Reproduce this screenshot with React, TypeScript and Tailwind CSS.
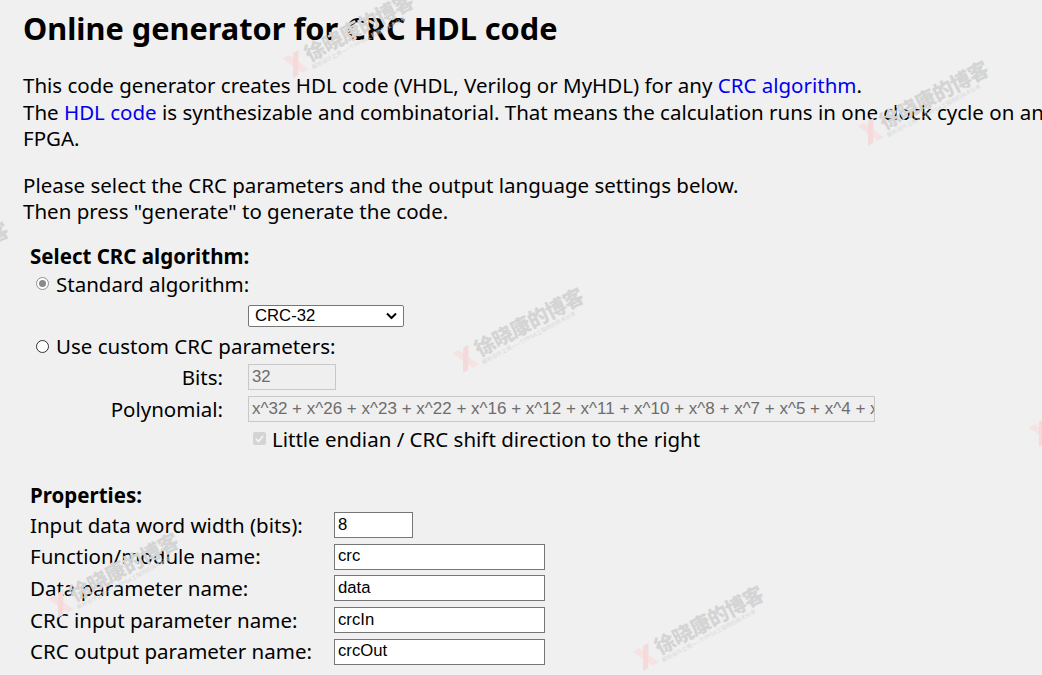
import React from 'react';

const POLY =
  'x^32 + x^26 + x^23 + x^22 + x^16 + x^12 + x^11 + x^10 + x^8 + x^7 + x^5 + x^4 + x^2 + x + 1';

function Watermark({ x, y }: { x: number; y: number }) {
  return (
    <div
      className="pointer-events-none absolute flex items-center gap-[3px] whitespace-nowrap -translate-x-1/2 -translate-y-1/2 rotate-[-28deg] select-none"
      style={{ left: x, top: y }}
    >
      <svg width="20" height="26" viewBox="0 0 20 26" className="shrink-0">
        <path d="M1 2 L8 2 L19 24 L12 24 Z" fill="#f6e2e2" />
        <path d="M19 2 L13 2 L1 24 L7 24 Z" fill="#f4dada" />
      </svg>
      <div className="flex flex-col leading-none">
        <span className="font-['Noto_Sans_CJK_SC',sans-serif] text-[20.5px] font-black tracking-[-0.5px] text-[#d4d4d4]">
          徐晓康的博客
        </span>
        <span className="mt-[2px] font-['Noto_Sans_CJK_SC',sans-serif] text-[5.5px] text-[#d8d8d8]">
          解析设计之美——个FPGA工程师的技术分享
        </span>
      </div>
    </div>
  );
}

function Radio({ checked }: { checked?: boolean }) {
  return checked ? (
    <span className="flex h-[13px] w-[13px] shrink-0 items-center justify-center rounded-full border border-[#8f8f8f] bg-white">
      <span className="h-[7px] w-[7px] rounded-full bg-[#8a8a8a]" />
    </span>
  ) : (
    <span className="h-[13px] w-[13px] shrink-0 rounded-full border border-[#333333] bg-white" />
  );
}

const inputCls =
  "h-[26px] border border-[#767676] bg-white px-[3px] font-['Liberation_Sans',Arial,sans-serif] text-[16.7px] text-black outline-none";

export default function App() {
  return (
    <div className="relative min-h-screen overflow-hidden bg-[#f0f0f0] px-[23px] font-['Noto_Sans',sans-serif] text-[20.5px] leading-[26.6px] text-black">
      <h1 className="mt-[8px] h-[40px] text-[30.7px] leading-[40px] font-bold whitespace-nowrap">
        Online generator for CRC HDL code
      </h1>

      <p className="mt-[24px] whitespace-nowrap">
        This code generator creates HDL code (VHDL, Verilog or MyHDL) for any{' '}
        <a className="text-[#0000ee]">CRC algorithm</a>.
        <br />
        The <a className="text-[#0000ee]">HDL code</a> is synthesizable and combinatorial. That means the calculation
        runs in one clock cycle on an
        <br />
        FPGA.
      </p>

      <p className="mt-[20px] whitespace-nowrap">
        Please select the CRC parameters and the output language settings below.
        <br />
        Then press "generate" to generate the code.
      </p>

      <form className="mt-[18px] pl-[7px] whitespace-nowrap">
        <div className="flex h-[26px] items-center font-bold">Select CRC algorithm:</div>

        <label className="flex h-[30px] items-center gap-[7px] pl-[6px]">
          <Radio checked />
          Standard algorithm:
        </label>

        <div className="flex h-[34px] items-center pl-[218px]">
          <div className="relative h-[22px] w-[156px] rounded-[2px] border border-[#767676] bg-white">
            <span className="absolute left-[6px] top-1/2 -translate-y-1/2 font-['Liberation_Sans',Arial,sans-serif] text-[16.7px] leading-none">
              CRC-32
            </span>
            <svg
              className="absolute right-[6px] top-1/2 -translate-y-1/2"
              width="11"
              height="7"
              viewBox="0 0 11 7"
              fill="none"
            >
              <path d="M1 1 L5.5 5.5 L10 1" stroke="#000" strokeWidth="2" />
            </svg>
          </div>
        </div>

        <label className="flex h-[27px] items-center gap-[7px] pl-[6px]">
          <Radio />
          Use custom CRC parameters:
        </label>

        <div className="flex h-[34px] items-center">
          <span className="w-[193px] text-right">Bits:</span>
          <div className="ml-[25px] flex h-[26px] w-[88px] items-center border border-[#c8c8c8] bg-[#efefef] px-[3px] font-['Liberation_Sans',Arial,sans-serif] text-[16.7px] text-[#6d6d6d]">
            32
          </div>
        </div>

        <div className="flex h-[31px] items-center">
          <span className="w-[193px] text-right">Polynomial:</span>
          <div className="ml-[25px] flex h-[26px] w-[627px] items-center overflow-hidden border border-[#c8c8c8] bg-[#efefef] px-[3px] font-['Liberation_Sans',Arial,sans-serif] text-[17px] text-[#6d6d6d]">
            {POLY}
          </div>
        </div>

        <label className="flex h-[28px] items-center gap-[6px] pl-[223px]">
          <span className="flex h-[13px] w-[13px] items-center justify-center rounded-[2px] bg-[#d4d4d4]">
            <svg width="9" height="8" viewBox="0 0 9 8" fill="none">
              <path d="M1 4 L3.5 6.5 L8 1" stroke="#f4f4f4" strokeWidth="1.8" />
            </svg>
          </span>
          Little endian / CRC shift direction to the right
        </label>

        <div className="mt-[28px] flex h-[28px] items-center font-bold">Properties:</div>

        {[
          ['Input data word width (bits):', '8', 'w-[79px]'],
          ['Function/module name:', 'crc', 'w-[211px]'],
          ['Data parameter name:', 'data', 'w-[211px]'],
          ['CRC input parameter name:', 'crcIn', 'w-[211px]'],
          ['CRC output parameter name:', 'crcOut', 'w-[211px]'],
        ].map(([label, value, w]) => (
          <div key={label} className="flex h-[31.7px] items-center">
            <span className="w-[304px]">{label}</span>
            <input readOnly value={value} className={`${inputCls} ${w}`} />
          </div>
        ))}
      </form>

      {/* watermarks */}
      <Watermark x={350} y={35} />
      <Watermark x={925} y={103} />
      <Watermark x={520} y={330} />
      <Watermark x={1096} y={404} />
      <Watermark x={-55} y={264} />
      <Watermark x={115} y={575} />
      <Watermark x={700} y={628} />
    </div>
  );
}
